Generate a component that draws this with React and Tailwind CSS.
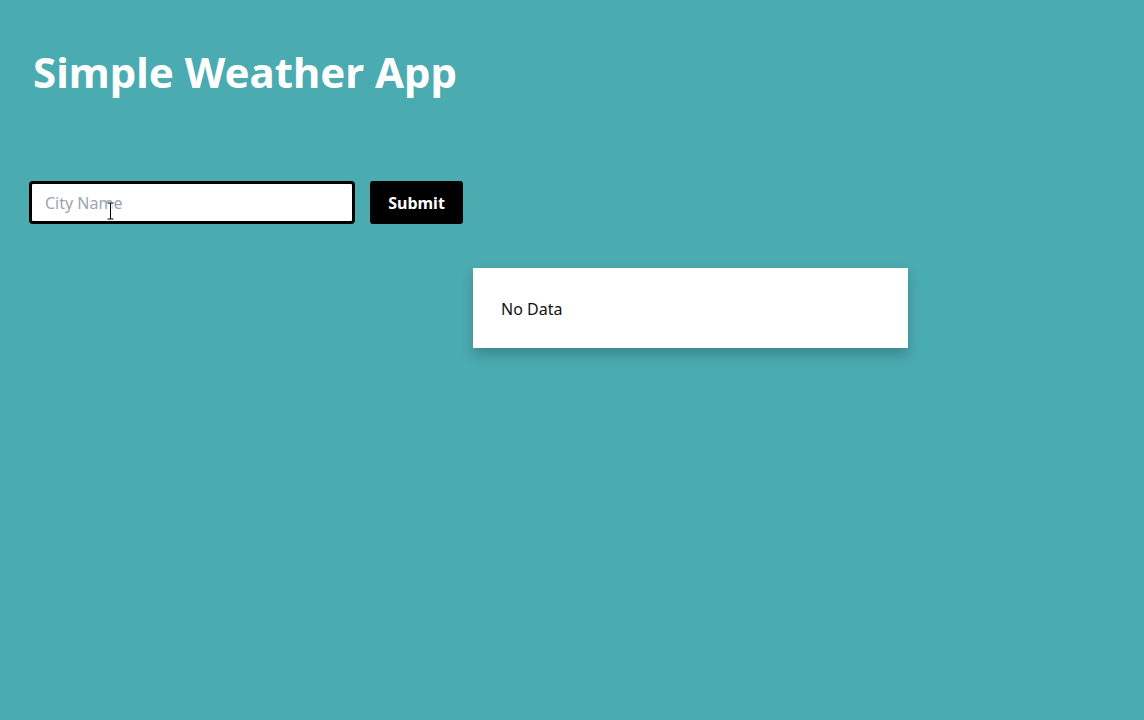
import React from 'react';

export default function App() {
  return (
    <div
      className="min-h-[720px] w-full bg-[#4aabb1] px-[29px] pt-[44px]"
      style={{ fontFamily: '"Segoe UI", "Noto Sans", "Open Sans", sans-serif' }}
    >
      <h1 className="pl-[4px] text-[42px] font-bold leading-[56px] text-white">Simple Weather App</h1>

      <form className="mt-[81px] flex items-center gap-[15px]" onSubmit={(e) => e.preventDefault()}>
        <div className="relative">
          <input
            type="text"
            placeholder="City Name"
            className="h-[43px] w-[326px] rounded-[4px] border-[3px] border-black bg-white px-[13px] text-[16px] text-black placeholder:text-[#9ca3af] focus:outline-none"
          />
          {/* text cursor over the input */}
          <svg className="absolute left-[78px] top-[21px]" width="7" height="18" viewBox="0 0 7 18">
            <path d="M0.5 1h6M3.5 1v16M0.5 17h6" stroke="#fff" strokeWidth="2.5" fill="none" />
            <path d="M0.5 1h6M3.5 1v16M0.5 17h6" stroke="#000" strokeWidth="1" fill="none" />
          </svg>
        </div>
        <button type="submit" className="h-[43px] w-[93px] rounded-[3px] bg-black text-[16px] font-bold text-white">
          Submit
        </button>
      </form>

      <div className="mt-[44px] ml-[444px] flex h-[80px] w-[435px] items-center bg-white px-[28px] pt-[2px] shadow-[0_7px_12px_rgba(0,0,0,0.2)]">
        <p className="text-[16px] text-[#111]">No Data</p>
      </div>
    </div>
  );
}
